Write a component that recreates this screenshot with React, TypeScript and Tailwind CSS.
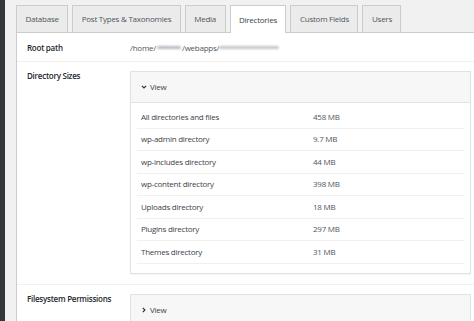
import React from 'react';

const tabs = ['Database', 'Post Types & Taxonomies', 'Media', 'Directories', 'Custom Fields', 'Users'];

const sizes = [
  ['All directories and files', '458 MB'],
  ['wp-admin directory', '9.7 MB'],
  ['wp-includes directory', '44 MB'],
  ['wp-content directory', '398 MB'],
  ['Uploads directory', '18 MB'],
  ['Plugins directory', '297 MB'],
  ['Themes directory', '31 MB'],
];

function Chevron({ open }: { open: boolean }) {
  return (
    <svg width="6" height="6" viewBox="0 0 10 10" className={open ? '' : '-rotate-90'}>
      <path d="M1.5 3 L5 6.5 L8.5 3" fill="none" stroke="#333" strokeWidth="2" />
    </svg>
  );
}

export default function App() {
  return (
    <div className="flex h-[321px] w-[474px] overflow-hidden bg-[#f1f1f1] font-['Open_Sans',sans-serif] text-[8px] tracking-[-0.25px] text-[#3c434a]">
      {/* admin menu edge */}
      <div className="w-[5px] shrink-0 bg-[#32373c]" />

      <div className="ml-[11px] flex flex-1 flex-col">
        {/* Tabs */}
        <div className="flex items-end gap-[4px] pt-[5px]">
          {tabs.map((t) => (
            <div
              key={t}
              className={
                t === 'Directories'
                  ? 'relative -mb-px flex h-[28px] items-center border border-b-0 border-[#ccc] bg-white px-[8.5px]'
                  : 'flex h-[27px] items-center border border-b-0 border-[#ccc] bg-[#ebebeb] px-[8.5px] text-[#50575e]'
              }
            >
              {t}
            </div>
          ))}
        </div>

        {/* Panel */}
        <div className="flex-1 border-t border-l border-[#ccc] bg-white">
          {/* Root path */}
          <div className="flex h-[29px] items-center border-b border-[#f0f0f0] pl-[10px] pt-[1px]">
            <div className="w-[103px] font-semibold text-[#23282d]">Root path</div>
            <div className="flex items-center text-[#50575e]">
              /home/
              <span className="mx-[1px] inline-block h-[3px] w-[24px] rounded bg-[#b9b9c4] blur-[1px]" />
              /webapps/
              <span className="inline-block h-[3px] w-[60px] rounded bg-[#c4c4cc] blur-[1px]" />
            </div>
          </div>

          {/* Directory Sizes */}
          <div className="flex border-b border-[#f0f0f0] pb-[10px] pl-[10px] pt-[9px]">
            <div className="w-[103px] leading-[10px] font-semibold text-[#23282d]">Directory Sizes</div>
            <div className="mr-[3px] flex-1 border border-[#e2e2e2] shadow-[0_1px_1px_rgba(0,0,0,0.04)]">
              <div className="flex h-[31px] items-center gap-[3px] border-b border-[#e2e2e2] bg-[#f7f7f7] pl-[10px]">
                <Chevron open />
                <span>View</span>
              </div>
              <div className="px-[6px] pb-[9px] pt-[3px]">
                {sizes.map(([name, size]) => (
                  <div key={name} className="flex h-[22.5px] items-center border-b border-[#f0f0f0] px-[4px]">
                    <div className="w-[172px]">{name}</div>
                    <div className="text-[#50575e]">{size}</div>
                  </div>
                ))}
              </div>
            </div>
          </div>

          {/* Filesystem Permissions */}
          <div className="flex pl-[10px] pt-[9px]">
            <div className="w-[103px] leading-[10px] font-semibold text-[#23282d]">Filesystem Permissions</div>
            <div className="mr-[3px] flex-1 border border-[#e2e2e2]">
              <div className="flex h-[31px] items-center gap-[3px] bg-[#f7f7f7] pl-[10px]">
                <Chevron open={false} />
                <span>View</span>
              </div>
            </div>
          </div>
        </div>
      </div>
    </div>
  );
}
